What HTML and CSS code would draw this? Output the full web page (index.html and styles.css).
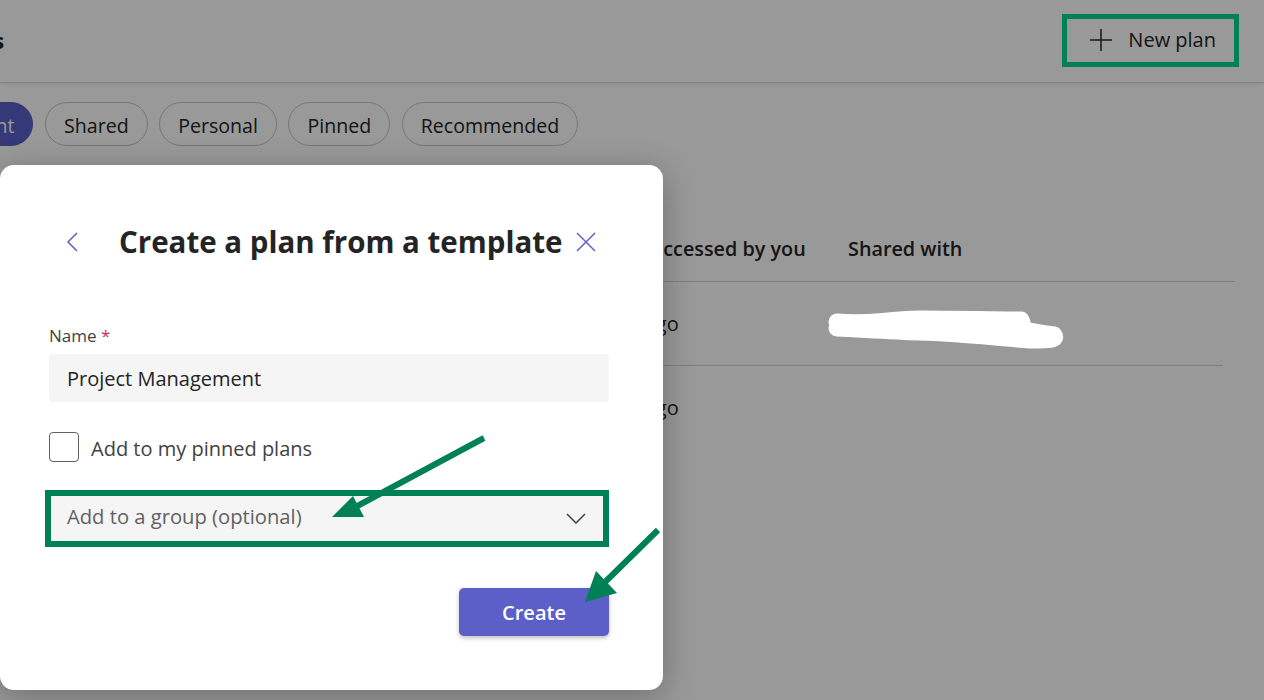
FILE: index.html
```html
<!DOCTYPE html>
<html lang="en">
<head>
    <meta charset="UTF-8">
    <meta name="viewport" content="width=device-width, initial-scale=1.0">
    <title>Planner</title>
    <link rel="stylesheet" href="styles.css">
</head>
<body>
    <div class="page">
        <div class="topbar">
            <h1 class="page-title">Plans</h1>
            <button type="button" class="new-plan">
                <svg class="plus-icon" viewBox="0 0 24 24"><path d="M12 1v22M1 12h22"/></svg>
                <span>New plan</span>
            </button>
        </div>

        <div class="filters">
            <span class="pill pill-active">Recent</span>
            <span class="pill">Shared</span>
            <span class="pill">Personal</span>
            <span class="pill">Pinned</span>
            <span class="pill">Recommended</span>
        </div>

        <div class="plan-table">
            <div class="table-row table-head">
                <span>Last accessed by you</span>
                <span>Shared with</span>
            </div>
            <div class="table-row">
                <span>2 days ago</span>
                <span></span>
            </div>
            <div class="table-row">
                <span>2 days ago</span>
                <span></span>
            </div>
        </div>

        <!-- Create plan dialog -->
        <div class="overlay"></div>
        <div class="dialog">
            <div class="dialog-head">
                <svg class="back-icon" viewBox="0 0 12 20"><path d="M11 1 2 10l9 9"/></svg>
                <h2 class="dialog-title">Create a plan from a template</h2>
                <svg class="close-icon" viewBox="0 0 20 20"><path d="M1 1l18 18M19 1 1 19"/></svg>
            </div>

            <label class="field-label" for="planName">Name <span class="required">*</span></label>
            <input class="text-input" type="text" id="planName" value="Project Management">

            <label class="check-row">
                <span class="checkbox"></span>
                <span>Add to my pinned plans</span>
            </label>

            <div class="group-select">
                <span>Add to a group (optional)</span>
                <svg class="chevron-icon" viewBox="0 0 20 11"><path d="M1 1l9 9 9-9"/></svg>
            </div>

            <div class="dialog-actions">
                <button type="button" class="create-btn">Create</button>
            </div>
        </div>

        <!-- Annotations drawn over the screenshot -->
        <svg class="scribble" viewBox="0 0 1264 700">
            <path d="M837 322C870 325 880 320 920 319C960 319 990 320 1021 320C1024 326 1020 329 1030 331C1040 333 1048 334 1054 335C1057 340 1050 340 1030 340C990 337 960 333 920 332C890 331 860 329 837 328" />
        </svg>
        <div class="mark mark-new-plan"></div>
        <div class="mark mark-group"></div>
        <svg class="arrows" viewBox="0 0 1264 700">
            <path class="arrow-line" d="M484 438 350 510"/>
            <path class="arrow-head" d="M332 517 353 496 364 517Z"/>
            <path class="arrow-line" d="M658 530 597 590"/>
            <path class="arrow-head" d="M585 602 596 571 617 593Z"/>
        </svg>
    </div>
</body>
</html>
```

FILE: styles.css
```css
body {
    margin: 0;
    font-family: "Open Sans", "Noto Sans", sans-serif;
    color: #242424;
}

.page {
    position: relative;
    width: 1264px;
    height: 700px;
    overflow: hidden;
    background-color: #fff;
}

.topbar {
    display: flex;
    justify-content: space-between;
    align-items: center;
    height: 83px;
    padding-right: 48px;
    padding-bottom: 3px;
    box-sizing: border-box;
    border-bottom: 1px solid #e0e0e0;
    box-shadow: 0 1px 3px rgba(0, 0, 0, 0.1);
}

.page-title {
    margin: 0 0 0 -55px;
    font-size: 22px;
    font-weight: 700;
}

.new-plan {
    display: flex;
    align-items: center;
    gap: 15px;
    border: none;
    background: none;
    padding: 0;
    font-family: inherit;
    font-size: 20px;
    color: #242424;
}

.plus-icon {
    width: 24px;
    height: 24px;
    fill: none;
    stroke: #242424;
    stroke-width: 1.5;
}

.filters {
    display: flex;
    gap: 11.5px;
    margin: 19px 0 0 -67px;
}

.pill {
    height: 44px;
    line-height: 45px;
    padding: 0 18px;
    box-sizing: border-box;
    border: 1px solid #c7c7c7;
    border-radius: 22px;
    font-size: 19.6px;
}

.pill-active {
    background-color: #5b5fc7;
    border-color: #5b5fc7;
    color: #fff;
}

.plan-table {
    margin: 74px 41px 0 580px;
}

.table-row {
    display: grid;
    grid-template-columns: 268px 1fr;
    align-items: center;
    height: 83px;
    border-bottom: 1px solid #d1d1d1;
    font-size: 20px;
}

.table-row:last-child {
    border-bottom: none;
}

.table-head {
    height: 62px;
    margin-right: -12px;
    padding-bottom: 5px;
    box-sizing: border-box;
    padding-left: 27px;
    grid-template-columns: 241px 1fr;
    font-size: 19.8px;
    font-weight: 600;
}

.overlay {
    position: absolute;
    inset: 0;
    background-color: rgba(0, 0, 0, 0.4);
}

.dialog {
    position: absolute;
    left: 0;
    top: 165px;
    width: 663px;
    height: 525px;
    box-sizing: border-box;
    padding: 52px 54px 0 49px;
    background-color: #fff;
    border-radius: 14px;
    box-shadow: 0 6px 32px rgba(0, 0, 0, 0.28);
}

.dialog-head {
    display: flex;
    align-items: center;
    height: 50px;
    margin-bottom: 57px;
}

.back-icon {
    width: 12px;
    height: 20px;
    margin-left: 17px;
    fill: none;
    stroke: #5b5fc7;
    stroke-width: 1.5;
}

.dialog-title {
    margin: -2px 14px 0 41px;
    font-size: 29.5px;
    font-weight: 700;
    white-space: nowrap;
}

.close-icon {
    width: 20px;
    height: 20px;
    fill: none;
    stroke: #5b5fc7;
    stroke-width: 1.5;
}

.field-label {
    display: block;
    height: 30px;
    font-size: 17px;
    line-height: 24px;
    color: #424242;
}

.required {
    color: #c4314b;
}

.text-input {
    display: block;
    width: 100%;
    height: 48px;
    box-sizing: border-box;
    padding: 0 18px;
    border: none;
    border-radius: 4px;
    background-color: #f5f5f5;
    font-family: inherit;
    font-size: 20px;
    color: #242424;
}

.check-row {
    display: flex;
    align-items: center;
    gap: 12px;
    margin-top: 30px;
    font-size: 20px;
    color: #424242;
}

.check-row span:last-child {
    margin-top: 2px;
}

.checkbox {
    width: 30px;
    height: 30px;
    box-sizing: border-box;
    border: 1px solid #616161;
    border-radius: 4px;
}

.group-select {
    display: flex;
    justify-content: space-between;
    align-items: center;
    height: 48px;
    margin-top: 32px;
    padding: 0 23px 0 18px;
    background-color: #f5f5f5;
    font-size: 20.2px;
    color: #616161;
}

.group-select span {
    margin-top: -4px;
}

.chevron-icon {
    width: 20px;
    height: 11px;
    fill: none;
    stroke: #424242;
    stroke-width: 1.5;
}

.dialog-actions {
    display: flex;
    justify-content: flex-end;
    margin-top: 46px;
}

.create-btn {
    width: 150px;
    height: 48px;
    border: none;
    border-radius: 5px;
    background-color: #5b5fc7;
    box-shadow: 0 2px 4px rgba(0, 0, 0, 0.25);
    font-family: inherit;
    font-size: 20px;
    font-weight: 600;
    color: #fff;
}

.scribble,
.arrows {
    position: absolute;
    left: 0;
    top: 0;
    width: 1264px;
    height: 700px;
}

.scribble path {
    fill: #fff;
    stroke: #fff;
    stroke-width: 17;
    stroke-linecap: round;
    stroke-linejoin: round;
}

.mark {
    position: absolute;
    box-sizing: border-box;
    border: 5px solid #008055;
}

.mark-new-plan {
    left: 1062px;
    top: 14px;
    width: 177px;
    height: 53px;
}

.mark-group {
    left: 45px;
    top: 490px;
    width: 564px;
    height: 57px;
    border-width: 6px;
}

.arrow-line {
    stroke: #008055;
    stroke-width: 6;
    fill: none;
}

.arrow-head {
    fill: #008055;
}
```
